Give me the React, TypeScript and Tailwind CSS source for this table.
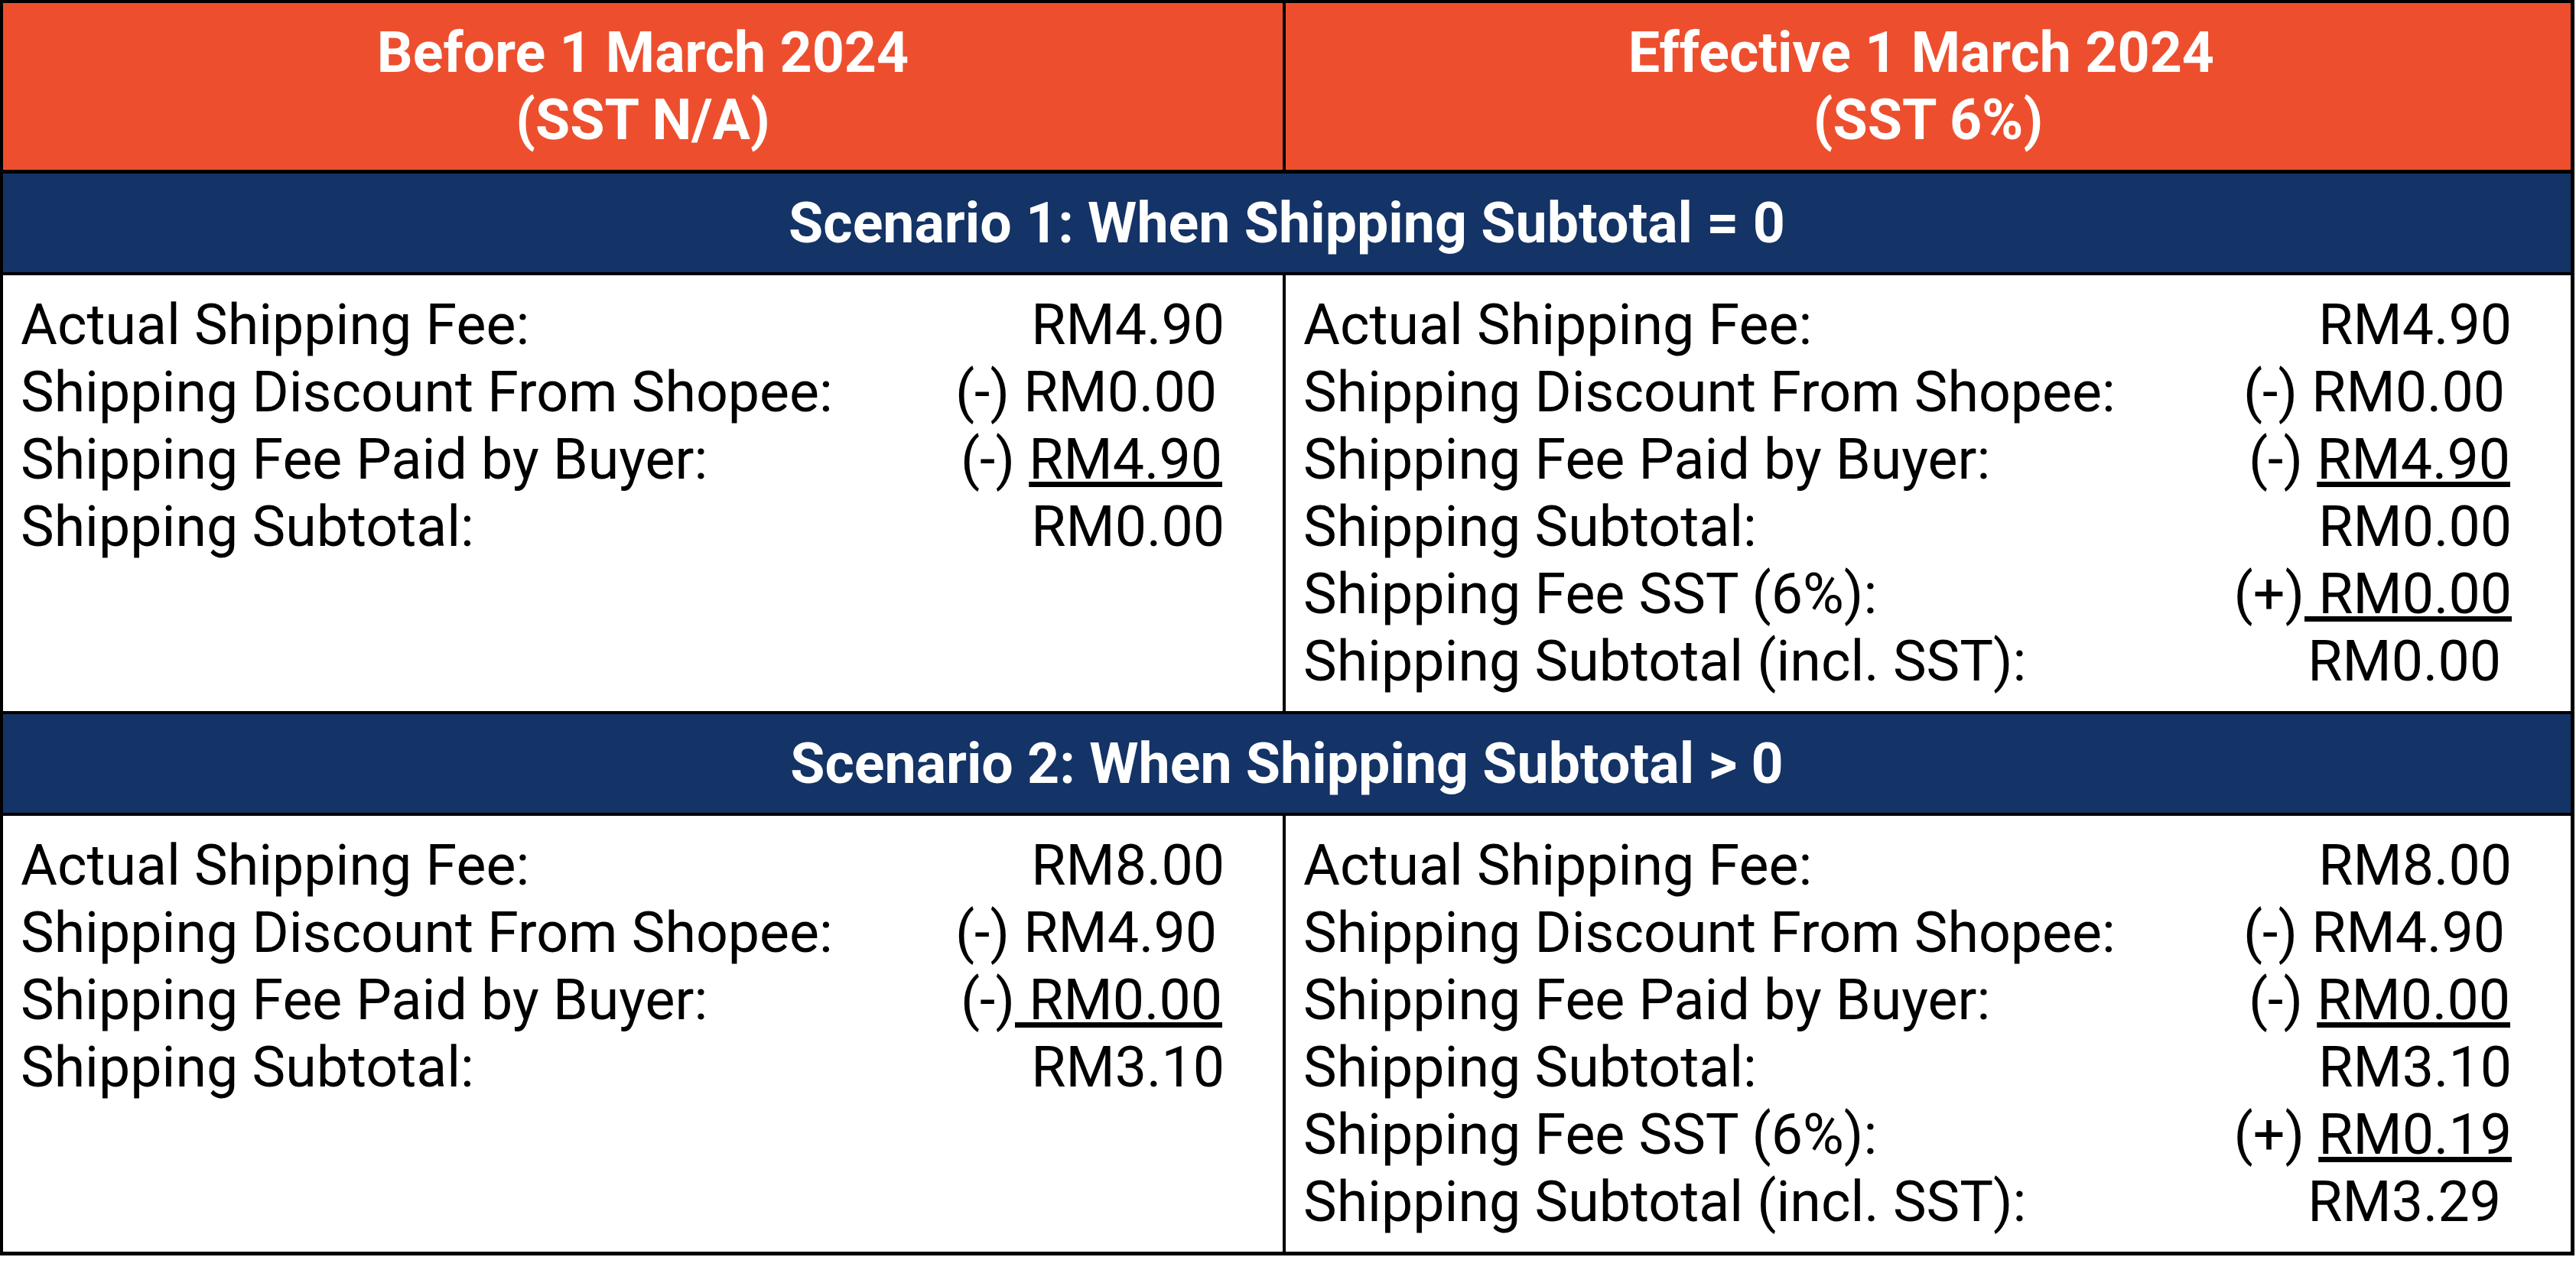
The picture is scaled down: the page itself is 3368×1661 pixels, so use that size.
import React from "react";

type Row = {
  label: string;
  prefix?: string;
  under?: string;
  value: string;
  shift?: string;
};

const s1Left: Row[] = [
  { label: "Actual Shipping Fee:", value: "RM4.90" },
  { label: "Shipping Discount From Shopee:", value: "(-) RM0.00", shift: "mr-[10px]" },
  { label: "Shipping Fee Paid by Buyer:", prefix: "(-) ", under: "RM4.90", value: "", shift: "mr-[3px]" },
  { label: "Shipping Subtotal:", value: "RM0.00" },
];

const s1Right: Row[] = [
  { label: "Actual Shipping Fee:", value: "RM4.90" },
  { label: "Shipping Discount From Shopee:", value: "(-) RM0.00", shift: "mr-[9px]" },
  { label: "Shipping Fee Paid by Buyer:", prefix: "(-) ", under: "RM4.90", value: "", shift: "mr-[2px]" },
  { label: "Shipping Subtotal:", value: "RM0.00" },
  { label: "Shipping Fee SST (6%):", prefix: "(+)", under: "\u00a0RM0.00", value: "" },
  { label: "Shipping Subtotal (incl. SST):", value: "RM0.00", shift: "mr-[14px]" },
];

const s2Left: Row[] = [
  { label: "Actual Shipping Fee:", value: "RM8.00" },
  { label: "Shipping Discount From Shopee:", value: "(-) RM4.90", shift: "mr-[10px]" },
  { label: "Shipping Fee Paid by Buyer:", prefix: "(-)", under: "\u00a0RM0.00", value: "", shift: "mr-[3px]" },
  { label: "Shipping Subtotal:", value: "RM3.10" },
];

const s2Right: Row[] = [
  { label: "Actual Shipping Fee:", value: "RM8.00" },
  { label: "Shipping Discount From Shopee:", value: "(-) RM4.90", shift: "mr-[9px]" },
  { label: "Shipping Fee Paid by Buyer:", prefix: "(-) ", under: "RM0.00", value: "", shift: "mr-[2px]" },
  { label: "Shipping Subtotal:", value: "RM3.10" },
  { label: "Shipping Fee SST (6%):", prefix: "(+) ", under: "RM0.19", value: "" },
  { label: "Shipping Subtotal (incl. SST):", value: "RM3.29", shift: "mr-[14px]" },
];

function Lines({ rows }: { rows: Row[] }) {
  return (
    <div className="flex flex-col">
      {rows.map((r, i) => (
        <div key={i} className="flex justify-between whitespace-pre">
          <span>{r.label}</span>
          <span className={r.shift ?? ""}>
            {r.prefix}
            {r.under ? <span className="underline">{r.under}</span> : null}
            {r.value}
          </span>
        </div>
      ))}
    </div>
  );
}

function ScenarioHeader({ text }: { text: string }) {
  return (
    <div className="h-[129px] bg-[#143366] flex items-center justify-center text-white font-bold text-[73.5px] leading-[88px]">
      {text}
    </div>
  );
}

function Body({ left, right }: { left: Row[]; right: Row[] }) {
  return (
    <div className="flex bg-white text-black text-[73.5px] leading-[88px]">
      <div className="w-[1677px] shrink-0 pl-[23px] pr-[76px] py-[21px] border-r-[4px] border-black">
        <Lines rows={left} />
      </div>
      <div className="flex-1 pl-[23px] pr-[77px] py-[21px]">
        <Lines rows={right} />
      </div>
    </div>
  );
}

export default function App() {
  return (
    <div className="bg-white w-[3368px] h-[1661px] font-[Roboto,sans-serif]">
      <div className="w-[3366px] border-t-[4px] border-l-[4px] border-r-[5px] border-b-[5px] border-black flex flex-col">
        <div className="flex bg-[#ed4f2e] text-white font-bold text-[73.5px] leading-[88px] text-center border-b-[5px] border-black">
          <div className="w-[1677px] shrink-0 py-[21px] border-r-[4px] border-black">
            <div>Before 1 March 2024</div>
            <div>(SST N/A)</div>
          </div>
          <div className="flex-1 py-[21px]">
            <div>Effective 1 March 2024&nbsp;</div>
            <div>(SST 6%)</div>
          </div>
        </div>
        <ScenarioHeader text="Scenario 1: When Shipping Subtotal = 0" />
        <div className="border-t-[4px] border-black" />
        <Body left={s1Left} right={s1Right} />
        <div className="border-t-[4px] border-black" />
        <ScenarioHeader text="Scenario 2: When Shipping Subtotal > 0" />
        <div className="border-t-[4px] border-black" />
        <Body left={s2Left} right={s2Right} />
      </div>
    </div>
  );
}
